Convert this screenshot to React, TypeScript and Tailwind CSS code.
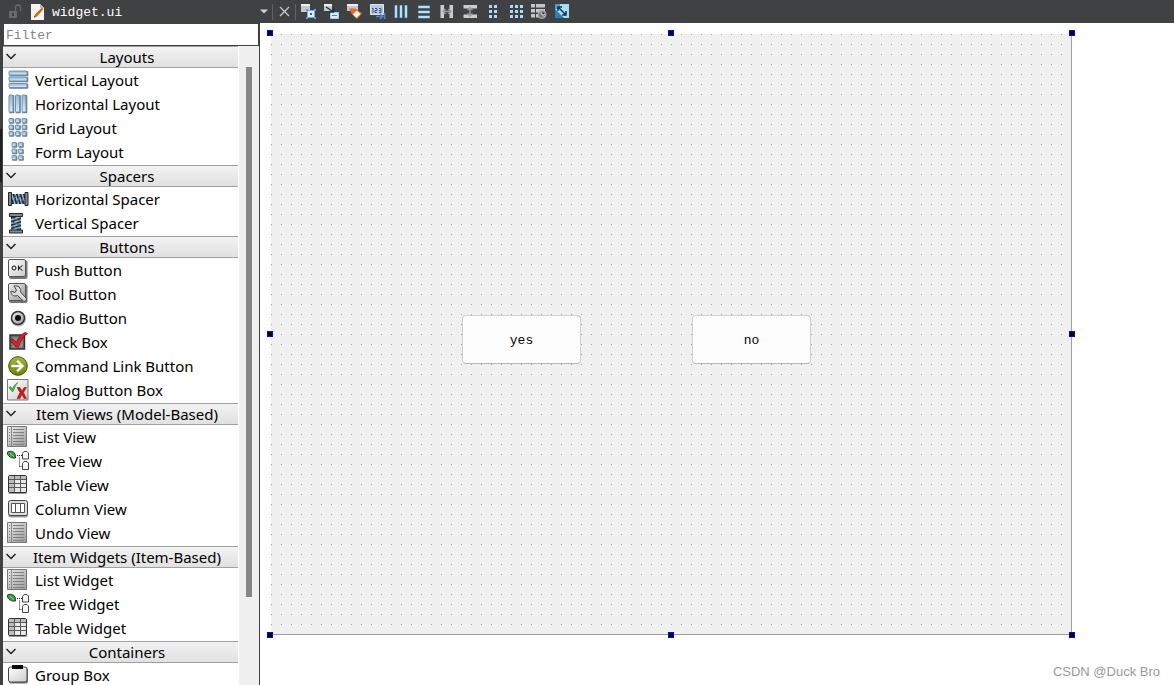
import { useState } from 'react';
import type { ReactNode } from 'react';

type WidgetProps = {
  name: string;
  icon: ReactNode;
};

type SectionProps = {
  title: string;
  widgets: WidgetProps[];
};

function Cells({ xs, ys, w, h }: { xs: number[]; ys: number[]; w: number; h: number }) {
  return (
    <g>
      {ys.map(y =>
        xs.map(x => (
          <g key={`${x}-${y}`}>
            <rect x={x} y={y} width={w + 1.3} height={h + 1.3} rx="1" fill="#6f7c89" />
            <rect x={x} y={y} width={w} height={h} rx="1" fill="url(#glass)" stroke="#7890a8" />
          </g>
        )),
      )}
    </g>
  );
}

const springTurns = [6, 9.5, 13, 16.5];

const horizontalSpacer = (
  <g>
    <path d="M4 6h15v10H4z" fill="#202b35" />
    {springTurns.map(x => (
      <path key={x} d={`M${x - 1.5} 6l3.5 10`} stroke="#9fc0dc" strokeWidth="1.5" />
    ))}
    <path d="M6 15l3-8M10 15l3-8M14 15l3-8" stroke="#59728a" />
    <path d="M1.5 4.5h3v13h-3zM18 4.5h3v13h-3z" fill="#84898e" stroke="#22272b" />
  </g>
);

const listIcon = (
  <g>
    <path d="M.5 .5h19v20H.5z" fill="url(#shade)" stroke="#777" />
    <path d="M4.500 1v19" stroke="#888" />
    <path d="M6 3.500h11M6 6.500h11M6 9.500h11M6 12.500h11M6 15.500h11M6 18.500h11" stroke="#808080" />
    <path d="M2 3.500h1M2 6.500h1M2 9.500h1M2 12.500h1M2 15.500h1M2 18.500h1" stroke="#777" />
  </g>
);

const treeIcon = (
  <g>
    <path d="M0 2.500C2 .5 7 1 8 4l.5 4C5 8.500 1 7 0 2.500z" fill="#35a044" stroke="#123f1c" />
    <path d="M2.500 3l4.500 3.500" stroke="#8ed898" />
    <path d="M10 5.500h5M12.500 7.500v9M12.500 16.500h3" stroke="#222" strokeDasharray="1 1" />
    <path
      d="M17 1.500h3l1.500 1.500V9H15.500V3.500zM17 11.500h3l1.500 1.500v6.500H15.500v-6z"
      fill="#f7f7f7"
      stroke="#444"
    />
  </g>
);

const tableIcon = (
  <g>
    <rect x="1.500" y="2" width="18.500" height="18" rx="1.500" fill="#999" />
    <rect x="1.500" y="1.500" width="18" height="17" rx="1.500" fill="#e9e9e9" stroke="#333" />
    <path d="M2 2h17v3H2zM2 5h5v13H2z" fill="#bdbdbd" />
    <path d="M2 5.500h17M2 9.500h17M2 13.500h17M7.500 2v16M13.500 2v16" stroke="#5a5a5a" />
  </g>
);

const sections: SectionProps[] = [
  {
    title: 'Layouts',
    widgets: [
      { name: 'Vertical Layout', icon: <Cells xs={[2]} ys={[2, 8, 14.5]} w={18} h={4} /> },
      { name: 'Horizontal Layout', icon: <Cells xs={[2, 8.5, 15]} ys={[2]} w={4} h={17} /> },
      { name: 'Grid Layout', icon: <Cells xs={[2, 8.5, 15]} ys={[1.5, 8, 14.5]} w={4} h={4} /> },
      { name: 'Form Layout', icon: <Cells xs={[5, 11.5]} ys={[1.5, 8, 14.5]} w={4} h={4} /> },
    ],
  },
  {
    title: 'Spacers',
    widgets: [
      { name: 'Horizontal Spacer', icon: horizontalSpacer },
      { name: 'Vertical Spacer', icon: <g transform="translate(20 0) rotate(90)">{horizontalSpacer}</g> },
    ],
  },
  {
    title: 'Buttons',
    widgets: [
      {
        name: 'Push Button',
        icon: (
          <g>
            <rect x="2" y="1.500" width="18.500" height="18.500" rx="2" fill="#777" />
            <rect x="1.500" y=".5" width="17" height="17" rx="1.500" fill="url(#panel)" stroke="#555" />
            <circle cx="7" cy="9" r="2" fill="none" stroke="#111" />
            <path d="M11.500 6.500v5M15.500 6.500L12 9l3.500 2.500" fill="none" stroke="#111" />
          </g>
        ),
      },
      {
        name: 'Tool Button',
        icon: (
          <g>
            <rect x="2" y="1.500" width="18.500" height="18.500" rx="2" fill="#777" />
            <rect x="1.500" y=".5" width="17" height="17" rx="1.500" fill="url(#shade)" stroke="#555" />
            <path
              d="M7 3c4-1 7.500 2 6.500 6l5.500 6c1 2-1 4-2.500 3l-6-5.500c-4 1.500-7-1-6.500-4.500l4 1.500L9.500 7z"
              fill="#ddd"
              stroke="#444"
            />
          </g>
        ),
      },
      {
        name: 'Radio Button',
        icon: (
          <g>
            <circle cx="11.500" cy="12" r="7.500" fill="#bbb" />
            <circle cx="11" cy="11" r="6.500" fill="url(#shade)" stroke="#333" strokeWidth="1.500" />
            <circle cx="11" cy="11" r="3" fill="#0c0c0c" />
          </g>
        ),
      },
      {
        name: 'Check Box',
        icon: (
          <g>
            <path d="M3 4h14.500v14H3z" fill="#6c6c6c" stroke="#333" strokeWidth="1.500" />
            <path d="M5.500 6.500h10v10h-10z" fill="#919191" />
            <path
              d="M3 9.500l3-1.500 3.500 3.500C11 7 14 3.500 18 1.500l2.500 1c-4.500 3-7 7.500-9 13.500H9z"
              fill="#d82328"
              stroke="#801014"
              strokeWidth=".8"
            />
          </g>
        ),
      },
      {
        name: 'Command Link Button',
        icon: (
          <g>
            <circle cx="11" cy="11" r="9.300" fill="url(#olive)" stroke="#424e0c" />
            <path d="M4 9.500h8L9 6.500l2-2 6.500 6.500-6.500 6.500-2-2 3-3H4z" fill="#fff" stroke="#6d8514" strokeWidth=".5" />
          </g>
        ),
      },
      {
        name: 'Dialog Button Box',
        icon: (
          <g>
            <path d="M.5 .5h20.500v20.500H.5z" fill="url(#panel)" stroke="#777" />
            <path d="M2 8.500l1.500-1 2 2.500c1-3 3-5 5-6.500-2 3-3 5.500-4.500 9H5z" fill="#43ad42" stroke="#43ad42" />
            <path
              d="M10 8.500h3l2 3.500 2-3.500h2.500l-3 5 3 6H17l-2-4-2 4h-3l3-6z"
              fill="#c91a20"
              stroke="#941116"
              strokeWidth=".5"
            />
          </g>
        ),
      },
    ],
  },
  {
    title: 'Item Views (Model-Based)',
    widgets: [
      { name: 'List View', icon: listIcon },
      { name: 'Tree View', icon: treeIcon },
      { name: 'Table View', icon: tableIcon },
      {
        name: 'Column View',
        icon: (
          <g>
            <rect x="1.500" y="3" width="19.500" height="16.500" rx="2" fill="#999" />
            <rect x="1.500" y="2.500" width="19" height="15" rx="2" fill="#ddd" stroke="#444" />
            <path d="M4.500 5.500h13v9h-13z" fill="#fff" stroke="#555" />
            <path d="M8.500 5.500v9M13.500 5.500v9" stroke="#555" />
          </g>
        ),
      },
      { name: 'Undo View', icon: listIcon },
    ],
  },
  {
    title: 'Item Widgets (Item-Based)',
    widgets: [
      { name: 'List Widget', icon: listIcon },
      { name: 'Tree Widget', icon: treeIcon },
      { name: 'Table Widget', icon: tableIcon },
    ],
  },
  {
    title: 'Containers',
    widgets: [
      {
        name: 'Group Box',
        icon: (
          <g>
            <rect x="2" y="4" width="19" height="15.500" rx="2" fill="#777" />
            <rect x="1.500" y="3" width="18.500" height="15" rx="2" fill="url(#panel)" stroke="#444" />
            <path d="M5 1h11v4H5z" fill="#080808" />
          </g>
        ),
      },
    ],
  },
];

const tools: WidgetProps[] = [
  {
    name: 'Edit Widgets',
    icon: (
      <g>
        <path d="M0 0h9v8H0z" fill="#c5c8cb" />
        <path d="M0 0h9v2H0z" fill="#f0f0f0" />
        <path d="M6.500 6.500h7v7h-7z" fill="#dcecff" stroke="#7fa8e6" />
        <path d="M5 5h2v2H5zM13 5h2v2h-2zM5 13h2v2H5zM13 13h2v2h-2z" fill="#6d97dc" />
        <path d="M9 9h2v2H9z" fill="#2e62b8" />
      </g>
    ),
  },
  {
    name: 'Edit Signals/Slots',
    icon: (
      <g>
        <path d="M0 0h8v7H0z" fill="#c5c8cb" />
        <path d="M0 0h8v2H0z" fill="#eee" />
        <path d="M6.500 8.500h8v6h-8z" fill="#dcecff" stroke="#a9c8f2" />
        <path d="M8 11.500h5" stroke="#4c7fc4" />
        <path d="M2 3l7 4.500M9.500 3.500V8H5" fill="none" stroke="#16344f" strokeWidth="1.400" />
      </g>
    ),
  },
  {
    name: 'Edit Buddies',
    icon: (
      <g>
        <path d="M0 0h11v7H0z" fill="#c5c8cb" />
        <path d="M0 0h11v2H0z" fill="#eee" />
        <path d="M2 4.500h6.500l6.500 5-5 5.500-5-4.500z" fill="#e8672a" />
        <path d="M9.500 6.500l4 3.500-4 4L6 10.500z" fill="#fff2e6" />
      </g>
    ),
  },
  {
    name: 'Edit Tab Order',
    icon: (
      <g>
        <path d="M.5 .5h13v10H.5z" fill="#b9c9de" stroke="#dce6f2" />
        <path d="M2 5l1-1v5M5 4.500h2v2H5v2h2M9 4.500h2v4H9M9 6.500h2" fill="none" stroke="#375d93" />
        <path d="M6 12.500h6M10 10l2.500 2.500-2.500 2.500M14.500 9v6" fill="none" stroke="#5089dc" strokeWidth="1.600" />
      </g>
    ),
  },
  {
    name: 'Lay Out Horizontally',
    icon: <path d="M1.500 1h3v13h-3zM6.500 1h3v13h-3zM11.500 1h3v13h-3z" fill="#b5e0fa" stroke="#33536c" strokeWidth=".6" />,
  },
  {
    name: 'Lay Out Vertically',
    icon: <path d="M2 1.500h12v3H2zM2 6.500h12v3H2zM2 11.500h12v3H2z" fill="#b5e0fa" stroke="#33536c" strokeWidth=".6" />,
  },
  {
    name: 'Lay Out Horizontally in Splitter',
    icon: (
      <g>
        <path d="M1.500 1h3.500v13H1.500zM10.500 1H14v13h-3.500z" fill="#cbcdce" />
        <path d="M4 7.500h8M6.500 5L4 7.500 6.500 10M9.500 5L12 7.500 9.500 10" fill="none" stroke="#9b9d9f" strokeWidth="1.500" />
      </g>
    ),
  },
  {
    name: 'Lay Out Vertically in Splitter',
    icon: (
      <g>
        <path d="M1.500 1H15v3.500H1.500zM1.500 10.500H15V14H1.500z" fill="#cbcdce" />
        <path d="M8 3v9M5.500 6L8 3.500 10.500 6M5.500 9.500L8 12l2.500-2.500" fill="none" stroke="#9b9d9f" strokeWidth="1.500" />
      </g>
    ),
  },
  {
    name: 'Lay Out in a Form Layout',
    icon: <path d="M4 1h3v3H4zM9 1h3v3H9zM4 6h3v3H4zM9 6h3v3H9zM4 11h3v3H4zM9 11h3v3H9z" fill="#a9daf7" />,
  },
  {
    name: 'Lay Out in a Grid',
    icon: (
      <path
        d="M2 1h3v3H2zM7 1h3v3H7zM12 1h3v3h-3zM2 6h3v3H2zM7 6h3v3H7zM12 6h3v3h-3zM2 11h3v3H2zM7 11h3v3H7zM12 11h3v3h-3z"
        fill="#a9daf7"
      />
    ),
  },
  {
    name: 'Break Layout',
    icon: (
      <g>
        <path d="M0 0h4v3.500H0zM5 0h9v3.500H5zM0 5h4v3.500H0zM5 5h9v3.500H5zM0 10h4v3.500H0zM5 10h4v3.500H5z" fill="#c3c5c7" />
        <circle cx="11" cy="10.500" r="4" fill="#77797b" stroke="#b4b6b8" />
        <path d="M8.500 8l5 5M11 7.500v3h3" stroke="#c4c4c4" />
      </g>
    ),
  },
  {
    name: 'Adjust Size',
    icon: (
      <g>
        <path d="M1 0h14v14H1z" fill="#a7dcf5" />
        <path d="M1 5l9 9H1z" fill="#2580b6" />
        <path d="M1 0h5v5H1z" fill="#4b9fcc" />
        <path d="M4 3l8 8M4 7V3h4M12 7v4H8" fill="none" stroke="#12354e" strokeWidth="1.500" />
      </g>
    ),
  },
];

const handles = [
  '-left-1 -top-1',
  'left-[397px] -top-1',
  'left-[798px] -top-1',
  '-left-1 top-[297px]',
  'left-[798px] top-[297px]',
  '-left-1 top-[598px]',
  'left-[397px] top-[598px]',
  'left-[798px] top-[598px]',
];

function Gradients() {
  return (
    <svg className="absolute size-0" aria-hidden="true">
      <defs>
        <linearGradient id="glass" x2="0" y2="1">
          <stop stopColor="#8db9da" />
          <stop offset="1" stopColor="#d3efff" />
        </linearGradient>
        <linearGradient id="shade" x2="1" y2="1">
          <stop stopColor="#eee" />
          <stop offset="1" stopColor="#999" />
        </linearGradient>
        <linearGradient id="panel" x2="1" y2="1">
          <stop stopColor="#fff" />
          <stop offset="1" stopColor="#ccc" />
        </linearGradient>
        <linearGradient id="olive" x2="0" y2="1">
          <stop stopColor="#a6b83c" />
          <stop offset="1" stopColor="#6a8608" />
        </linearGradient>
      </defs>
    </svg>
  );
}

function Toolbar() {
  return (
    <header className="flex h-[23px] shrink-0 items-center bg-[#404142]">
      <div className="relative flex h-full w-[272px] shrink-0 items-center pl-2">
        <svg className="mr-2 h-4 w-[14px]" viewBox="0 0 14 16" fill="none" aria-hidden="true">
          <path d="M1 7h8v7H1z" fill="#686868" />
          <path d="M7.500 7V3.500a2.500 2.500 0 015 0V7" stroke="#686868" strokeWidth="1.300" />
          <path d="M4 9h2v3H4z" fill="#404142" />
        </svg>
        <svg className="mr-2 h-4 w-[14px]" viewBox="0 0 14 16" aria-hidden="true">
          <path d="M1 0h9l4 4v12H1z" fill="#f4f4f4" />
          <path d="M10 0v4h4z" fill="#bbb" />
          <path d="M4 13.500l1-3 7-7 1.500 1.500-6.500 7.500z" fill="#c56d17" />
          <path d="M4 13.500l.5-1.500 1 1z" fill="#333" />
        </svg>
        <select
          aria-label="Open document"
          className="h-full flex-1 appearance-none bg-transparent pt-[2px] font-['Liberation_Mono',monospace] text-[13px] text-white outline-none"
        >
          <option>widget.ui</option>
        </select>
        <svg className="pointer-events-none absolute right-1 top-[9px] h-[5px] w-2" viewBox="0 0 8 5" aria-hidden="true">
          <path d="M0 .5h8L4 4.500z" fill="#d2d2d2" />
        </svg>
      </div>
      <div className="flex h-4 w-6 shrink-0 items-center justify-center border-x border-[#626262]">
        <button aria-label="Close document">
          <svg className="size-[11px]" viewBox="0 0 11 11" aria-hidden="true">
            <path d="M1 1l9 9M10 1l-9 9" stroke="#ccc" strokeWidth="1.200" />
          </svg>
        </button>
      </div>
      <div className="ml-[5px] flex gap-[7px]">
        {tools.map(tool => (
          <button key={tool.name} aria-label={tool.name}>
            <svg className="size-4" viewBox="0 0 16 16" aria-hidden="true">
              {tool.icon}
            </svg>
          </button>
        ))}
      </div>
    </header>
  );
}

function WidgetBox() {
  const [filter, setFilter] = useState('');
  const [closed, setClosed] = useState<string[]>([]);

  function toggle(title: string) {
    setClosed(closed.includes(title) ? closed.filter(t => t !== title) : [...closed, title]);
  }

  return (
    <aside className="flex w-[260px] shrink-0 border-r border-[#404142]">
      <div className="w-[3px] shrink-0 bg-[#404142] pt-[106px]">
        <div className="h-[53px] w-[2px] bg-[#1f1f20]" />
      </div>
      <div className="flex min-w-0 flex-1 flex-col">
        <input
          aria-label="Filter"
          className="h-[23px] shrink-0 border border-[#404142] bg-white px-[2px] pt-[2px] font-['Liberation_Mono',monospace] text-[13px] outline-none placeholder:text-[#858585]"
          placeholder="Filter"
          value={filter}
          onChange={e => setFilter(e.target.value)}
        />
        <div className="flex min-h-0 flex-1">
          <div className="min-w-0 flex-1 overflow-hidden bg-white">
            {sections.map(section => (
              <section key={section.title}>
                <button
                  className="relative block h-[22px] w-full border-y border-[#a0a0a0] bg-linear-to-b from-[#f2f2f2] to-[#e1e1e1] pl-[13px] text-center leading-5"
                  onClick={() => toggle(section.title)}
                >
                  <svg className="absolute left-[3px] top-[6px] h-[7px] w-[10px]" viewBox="0 0 10 7" aria-hidden="true">
                    <path d="M.5 1L5 5.500 9.500 1" fill="none" stroke="#222" strokeWidth="1.500" />
                  </svg>
                  {section.title}
                </button>
                {!closed.includes(section.title) && (
                  <ul className="mb-px">
                    {section.widgets
                      .filter(w => w.name.toLowerCase().includes(filter.toLowerCase()))
                      .map(w => (
                        <li key={w.name} className="flex h-6 items-center gap-[6px] whitespace-nowrap pl-1">
                          <svg className="size-[22px]" viewBox="0 0 22 22" aria-hidden="true">
                            {w.icon}
                          </svg>
                          {w.name}
                        </li>
                      ))}
                  </ul>
                )}
              </section>
            ))}
          </div>
          <div className="ml-px w-5 shrink-0 bg-[#f0f0f0] pt-[21px]">
            <div className="ml-[7px] h-[530px] w-[6px] bg-[#868686]" />
          </div>
        </div>
      </div>
    </aside>
  );
}

function FormEditor() {
  return (
    <main className="relative flex-1 overflow-hidden bg-white pl-[11px] pt-[11px]">
      <div className="relative h-[601px] w-[801px] border-b border-r border-[#a0a0a0] bg-[#f0f0f0] bg-[radial-gradient(circle_at_0.5px_0.5px,#a0a0a0_0.7px,transparent_0.7px)] bg-[size:10px_10px]">
        <button className="absolute left-[191px] top-[281px] h-[49px] w-[119px] rounded border border-[#d0d0d0] border-b-[#b8b8b8] bg-[#fdfdfd] pt-[2px] font-['Liberation_Mono',monospace] text-[13px]">
          yes
        </button>
        <button className="absolute left-[421px] top-[281px] h-[49px] w-[119px] rounded border border-[#d0d0d0] border-b-[#b8b8b8] bg-[#fdfdfd] pt-[2px] font-['Liberation_Mono',monospace] text-[13px]">
          no
        </button>
        {handles.map(place => (
          <span key={place} className={`absolute size-[6px] border border-[#0000ff] bg-black ${place}`} />
        ))}
      </div>
      <p className="absolute bottom-1 right-[14px] font-['Liberation_Sans',sans-serif] text-[13px] text-[#999]">
        CSDN @Duck Bro
      </p>
    </main>
  );
}

export default function App() {
  return (
    <div className="flex h-screen flex-col overflow-hidden bg-white font-['Noto_Sans',sans-serif] text-[15px] text-black">
      <Gradients />
      <Toolbar />
      <div className="flex min-h-0 flex-1">
        <WidgetBox />
        <FormEditor />
      </div>
    </div>
  );
}
